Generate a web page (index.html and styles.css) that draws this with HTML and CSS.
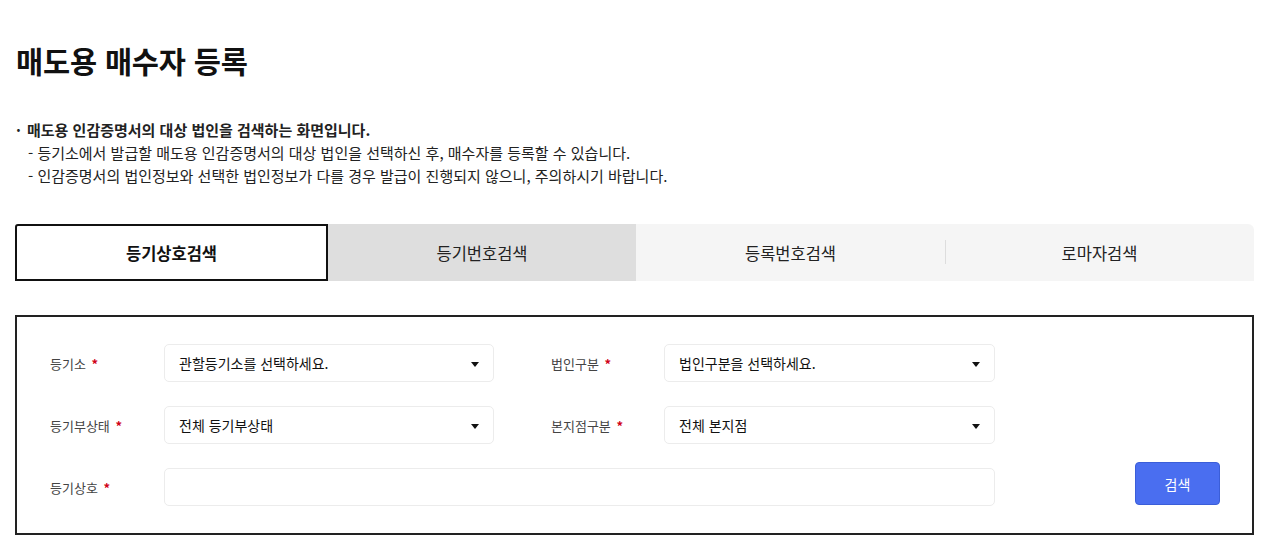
FILE: index.html
```html
<!DOCTYPE html>
<html lang="ko">
<head>
<meta charset="utf-8">
<title>매도용 매수자 등록</title>
<link rel="stylesheet" href="styles.css">
</head>
<body>
<div class="page">
  <h1 class="title">매도용 매수자 등록</h1>
  <div class="notes">
    <p class="note-main"><span class="dot">·</span>매도용 인감증명서의 대상 법인을 검색하는 화면입니다.</p>
    <p class="note-sub">- 등기소에서 발급할 매도용 인감증명서의 대상 법인을 선택하신 후, 매수자를 등록할 수 있습니다.</p>
    <p class="note-sub">- 인감증명서의 법인정보와 선택한 법인정보가 다를 경우 발급이 진행되지 않으니, 주의하시기 바랍니다.</p>
  </div>
  <div class="tabs">
    <div class="tab tab-active">등기상호검색</div>
    <div class="tab tab-hover">등기번호검색</div>
    <div class="tab">등록번호검색</div>
    <div class="tab tab-sep">로마자검색</div>
  </div>
  <div class="form-box">
    <div class="fields">
      <label class="lbl">등기소 <span class="req">*</span></label>
      <div class="select"><span>관할등기소를 선택하세요.</span><i class="caret"></i></div>
      <label class="lbl lbl2">법인구분 <span class="req">*</span></label>
      <div class="select"><span>법인구분을 선택하세요.</span><i class="caret"></i></div>

      <label class="lbl">등기부상태 <span class="req">*</span></label>
      <div class="select"><span>전체 등기부상태</span><i class="caret"></i></div>
      <label class="lbl lbl2">본지점구분 <span class="req">*</span></label>
      <div class="select"><span>전체 본지점</span><i class="caret"></i></div>

      <label class="lbl">등기상호 <span class="req">*</span></label>
      <div class="input wide"></div>
    </div>
    <div class="actions">
      <button class="btn" type="button">검색</button>
    </div>
  </div>
</div>
</body>
</html>
```

FILE: styles.css
```css
* { box-sizing: border-box; }
html, body { margin: 0; padding: 0; background: #fff; }
body {
  font-family: "Noto Sans CJK KR", "Noto Sans", sans-serif;
  color: #111;
}
.page {
  padding: 40px 26px 0 15px;
}
.title {
  margin: 0 0 38px 1px;
  font-size: 29.5px;
  line-height: 40px;
  font-weight: 700;
  color: #111;
  letter-spacing: -0.2px;
}
.notes p {
  margin: 0;
  line-height: 23px;
  color: #222;
}
.note-main {
  font-size: 15px;
  font-weight: 700;
  color: #111;
}
.note-main .dot {
  display: inline-block;
  width: 12px;
  padding-left: 1px;
}
.note-sub {
  font-size: 15px;
  padding-left: 13px;
  color: #333;
}
.tabs {
  margin-top: 37px;
  display: grid;
  grid-template-columns: 313px 308px 309px 1fr;
  height: 57px;
  background: #f5f5f5;
  border-radius: 2px 6px 0 0;
}
.tab {
  display: flex;
  align-items: center;
  justify-content: center;
  font-size: 16.5px;
  color: #222;
  position: relative;
}
.tab-active {
  background: #fff;
  border: 2px solid #111;
  border-radius: 3px 0 0 0;
  font-weight: 700;
  color: #111;
}
.tab-hover {
  background: #dedede;
}
.tab-sep::before {
  content: "";
  position: absolute;
  left: 0;
  top: 16px;
  height: 24px;
  border-left: 1px solid #ddd;
}
.form-box {
  margin-top: 34px;
  height: 220px;
  border: 2px solid #222;
  padding: 27px 33px 0 33px;
  display: flex;
}
.fields {
  display: grid;
  grid-template-columns: 114px 330px 170px 331px;
  grid-auto-rows: 38px;
  row-gap: 24px;
  align-items: center;
}
.lbl {
  font-size: 13px;
  color: #444;
}
.lbl2 {
  padding-left: 57px;
}
.req {
  color: #d0021b;
  font-weight: 700;
  margin-left: 2px;
}
.select, .input {
  height: 38px;
  border: 1px solid #ececec;
  border-radius: 5px;
  background: #fff;
  display: flex;
  align-items: center;
  justify-content: space-between;
  padding: 0 14px 0 14px;
  font-size: 14px;
  color: #111;
}
.wide {
  grid-column: 2 / 5;
}
.caret {
  width: 0;
  height: 0;
  border-left: 4.5px solid transparent;
  border-right: 4.5px solid transparent;
  border-top: 5.5px solid #111;
  margin-top: 2px;
}
.actions {
  flex: 1;
  display: flex;
  align-items: flex-start;
  padding-top: 118px;
  padding-left: 140px;
}
.btn {
  width: 85px;
  height: 43px;
  background: #4a6ef0;
  border: 1px solid #3b5ed8;
  border-radius: 4px;
  color: #fff;
  font-family: "Noto Sans CJK KR", "Noto Sans", sans-serif;
  font-size: 14px;
  cursor: pointer;
}
```
